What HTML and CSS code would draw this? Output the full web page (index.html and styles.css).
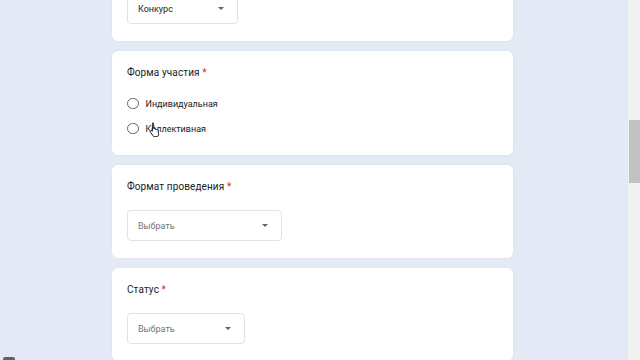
FILE: index.html
```html
<!DOCTYPE html>
<html lang="ru">
<head>
  <meta charset="UTF-8" />
  <title>Форма</title>
  <link rel="stylesheet" href="styles.css">
</head>
<body>
  <div class="page">
    <div class="form">
      <div class="card">
        <div class="select first w111">
          <span class="value">Конкурс</span>
          <span class="arrow"></span>
        </div>
      </div>

      <div class="card">
        <div class="title">Форма участия <span class="req">*</span></div>
        <div class="options">
          <label class="option"><span class="radio"></span>Индивидуальная</label>
          <label class="option"><span class="radio"></span>Коллективная</label>
        </div>
        <svg class="cursor" width="12" height="15" viewBox="0 0 12 15">
          <path d="M3.5 1.2c.7 0 1.2.5 1.2 1.2v4.3l.4-.1c.6-.1 1.1.2 1.3.6.5-.2 1.1 0 1.3.5.5-.2 1.2.1 1.3.7l.6 3.2c.1.9-.1 1.8-.7 2.6l-.4.5H4.8L1.6 10.3c-.4-.5-.3-1.2.2-1.5.4-.3 1-.3 1.3.1l.3.3V2.4c0-.7.5-1.2 1.1-1.2z" fill="#fff" stroke="#000" stroke-width="0.9" stroke-linejoin="round"/>
        </svg>
      </div>

      <div class="card">
        <div class="title">Формат проведения <span class="req">*</span></div>
        <div class="select w155">
          <span class="value placeholder">Выбрать</span>
          <span class="arrow"></span>
        </div>
      </div>

      <div class="card">
        <div class="title">Статус <span class="req">*</span></div>
        <div class="select w118">
          <span class="value placeholder">Выбрать</span>
          <span class="arrow"></span>
        </div>
      </div>
    </div>
    <div class="help"></div>
  </div>
  <div class="scrollbar"><div class="thumb"></div></div>
</body>
</html>
```

FILE: styles.css
```css
html, body { margin: 0; height: 100%; overflow: hidden; }
body { display: flex; font-family: Roboto, "Noto Sans", Arial, sans-serif; background: #e4e9f6; color: #202124; }

.page { position: relative; flex: 1; overflow: hidden; }
.form { width: 401px; margin: -22px 0 0 112px; display: flex; flex-direction: column; gap: 10px; }

.card {
  position: relative; background: #fff; border-radius: 6px;
  padding: 15px 15px 17px; box-shadow: 0 0 0 1px #dfe5f2;
}
.title { font-size: 10px; line-height: 14px; letter-spacing: 0.1px; }
.req { color: #d93025; }

.select {
  margin-top: 16px; height: 31px; box-sizing: border-box;
  border: 1px solid #e0e2e6; border-radius: 4px;
  display: flex; align-items: center; justify-content: space-between;
  padding: 0 13px 0 10px;
}
.select.first { margin-top: 0; }
.select.w111 { width: 111px; }
.select.w155 { width: 155px; }
.select.w118 { width: 118px; }
.value { font-size: 9px; color: #202124; }
.value.placeholder { color: #70757a; }
.arrow { width: 0; height: 0; border-left: 3.5px solid transparent; border-right: 3.5px solid transparent; border-top: 3.5px solid #5f6368; }

.options { margin-top: 11px; margin-bottom: -3px; }
.option { display: flex; align-items: center; height: 25px; font-size: 9px; color: #202124; }
.radio { width: 9.5px; height: 9.5px; border: 1.4px solid #5f6368; border-radius: 50%; margin-right: 7px; }

.cursor { position: absolute; left: 37px; top: 71px; }

.help { position: absolute; left: 3px; bottom: -6px; width: 12px; height: 9px; background: #5f6368; border-radius: 2px; }

.scrollbar { width: 12px; background: #f1f1f1; display: flex; flex-direction: column; }
.thumb { margin: 120px 0 0 1px; height: 63px; background: #c1c1c1; }
```
